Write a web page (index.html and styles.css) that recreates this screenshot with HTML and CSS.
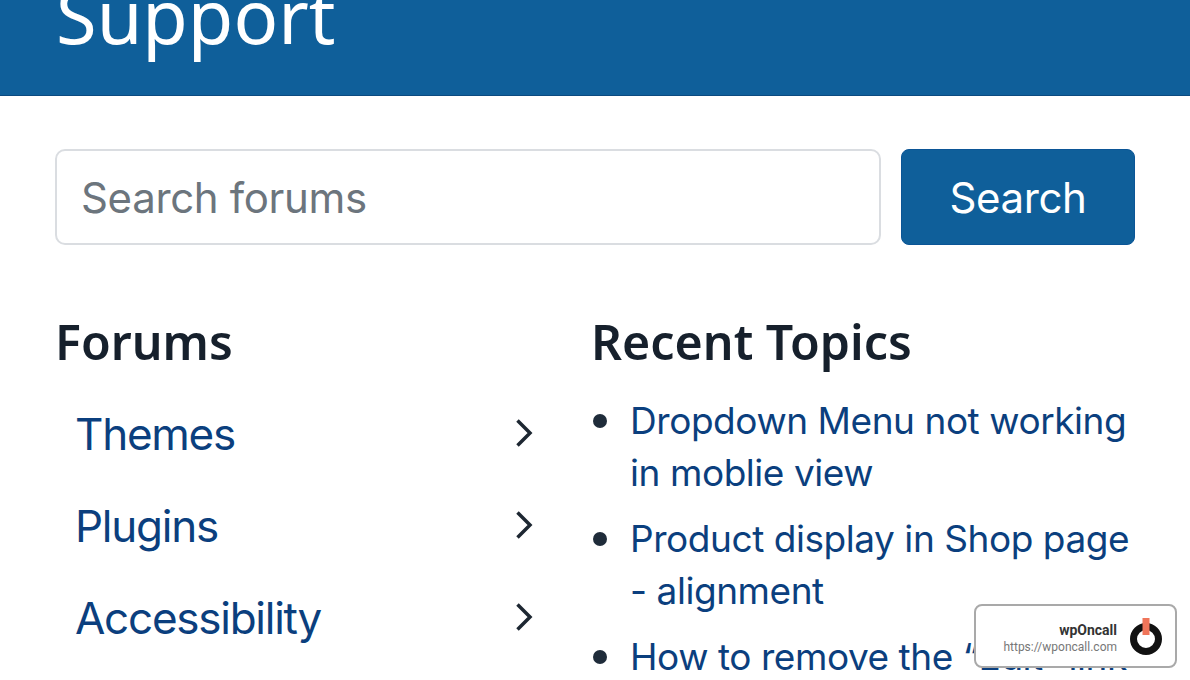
FILE: index.html
```html
<!DOCTYPE html>
<html lang="en">
<head>
<meta charset="utf-8">
<title>Support</title>
<link rel="stylesheet" href="styles.css">
</head>
<body>
<header class="hero"><h1 class="hero-title">Support</h1></header>
<main class="main">
  <form class="search">
    <input class="search-input" type="text" placeholder="Search forums">
    <button class="search-button" type="button">Search</button>
  </form>
  <div class="columns">
    <section class="col-forums">
      <h2 class="heading">Forums</h2>
      <ul class="forum-list">
        <li class="forum-row"><a class="forum-link">Themes</a><svg class="chev" viewBox="0 0 18 30"><path d="M2.5 2.5 15 15 2.5 27.5"/></svg></li>
        <li class="forum-row"><a class="forum-link">Plugins</a><svg class="chev" viewBox="0 0 18 30"><path d="M2.5 2.5 15 15 2.5 27.5"/></svg></li>
        <li class="forum-row"><a class="forum-link">Accessibility</a><svg class="chev" viewBox="0 0 18 30"><path d="M2.5 2.5 15 15 2.5 27.5"/></svg></li>
      </ul>
    </section>
    <section class="col-topics">
      <h2 class="heading">Recent Topics</h2>
      <ul class="topic-list">
        <li class="topic"><a class="topic-link">Dropdown Menu not working in moblie view</a></li>
        <li class="topic"><a class="topic-link">Product display in Shop page - alignment</a></li>
        <li class="topic"><a class="topic-link">How to remove the “Edit” link</a></li>
      </ul>
    </section>
  </div>
</main>
<aside class="badge">
  <div class="badge-text"><strong class="badge-name">wpOncall</strong><span class="badge-url">https://wponcall.com</span></div>
  <svg class="badge-icon" viewBox="0 0 34 38"><circle cx="17" cy="22" r="12.5"/><rect x="13.5" y="1" width="7" height="17"/></svg>
</aside>
</body>
</html>
```
FILE: styles.css
```css
* { box-sizing: border-box; }
html, body { margin: 0; height: 680px; overflow: hidden; background: #fff; }
body { font-family: Inter, Roboto, "Liberation Sans", sans-serif; color: #16202c; }
.hero { height: 96px; background: #0f5f9a; border-bottom: 1px solid #0b4a80; overflow: hidden; padding: 0 56px; }
.hero-title { margin: -34px 0 0; font: 400 74px/100px "Noto Sans", sans-serif; color: #fff; }
.main { padding: 53px 55px 0; }
.search { display: flex; gap: 20px; height: 96px; }
.search-input { flex: 1; min-width: 0; border: 2px solid #dadde1; border-radius: 10px; padding: 0 24px; font: 440 42px Inter, sans-serif; letter-spacing: -0.35px; color: #333; background: #fff; outline: none; }
.search-input::placeholder { color: #6c757d; opacity: 1; }
.search-button { width: 234px; border: 1px solid #0b5596; border-radius: 8px; background: #0f5f9a; color: #fff; font: 440 42px Inter, sans-serif; letter-spacing: -0.4px; padding: 0; }
.columns { display: flex; margin-top: 67px; }
.col-forums { width: 480px; }
.col-topics { width: 545px; margin-left: 57px; }
.heading { margin: 0; font: 600 48.3px/58px "Noto Sans", sans-serif; color: #16202c; }
.forum-list, .topic-list { list-style: none; margin: 0; padding: 0; }
.forum-list { margin-top: 18px; }
.forum-row { height: 92px; display: flex; align-items: center; justify-content: space-between; padding: 0 1px 0 20px; }
.forum-link { font: 440 44px Inter, sans-serif; letter-spacing: -1.25px; color: #0b3f7e; }
.chev { width: 18px; height: 30px; margin-top: -2px; fill: none; stroke: #1d2732; stroke-width: 3.5; }
.topic-list { margin-top: 25px; padding-left: 39px; }
.topic { position: relative; font-size: 37px; font-weight: 440; letter-spacing: -0.45px; line-height: 52px; margin-bottom: 14px; }
.topic::before { content: ""; position: absolute; left: -37px; top: 19px; width: 14px; height: 14px; border-radius: 50%; background: #1f2c3a; }
.topic-link { color: #0b3f7e; }
.badge { position: fixed; left: 974px; top: 604px; width: 203px; height: 64px; display: flex; align-items: center; justify-content: flex-end; gap: 12px; padding: 0 12px 0 0; background: #fff; border: 2px solid #a9a9a9; border-radius: 8px; }
.badge-text { display: flex; flex-direction: column; align-items: flex-end; gap: 1px; margin-top: 4px; font-family: Roboto, sans-serif; }
.badge-name { font-size: 14px; line-height: 16px; font-weight: 700; color: #333; }
.badge-url { font-size: 12px; line-height: 16px; color: #777; }
.badge-icon { width: 34px; height: 38px; }
.badge-icon circle { fill: none; stroke: #111; stroke-width: 7; }
.badge-icon rect { fill: #f0755a; }
```
